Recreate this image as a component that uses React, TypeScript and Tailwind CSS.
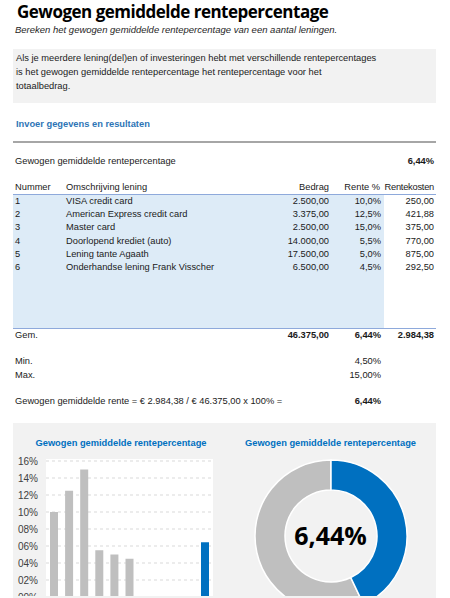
import React from "react";

const rows = [
  ["1", "VISA credit card", "2.500,00", "10,0%", "250,00"],
  ["2", "American Express credit card", "3.375,00", "12,5%", "421,88"],
  ["3", "Master card", "2.500,00", "15,0%", "375,00"],
  ["4", "Doorlopend krediet (auto)", "14.000,00", "5,5%", "770,00"],
  ["5", "Lening tante Agaath", "17.500,00", "5,0%", "875,00"],
  ["6", "Onderhandse lening Frank Visscher", "6.500,00", "4,5%", "292,50"],
];

const bars = [10, 12.5, 15, 5.5, 5, 4.5, 0, 0, 0, 0, 6.44];

function BarChart() {
  const px = 8.5;
  const base = 144; // local y of 0%
  const ticks = [16, 14, 12, 10, 8, 6, 4, 2, 0];
  return (
    <svg width="212" height="143" className="block">
      <rect x="33" y="6" width="167" height="150" fill="#ffffff" />
      {ticks.map((t) => (
        <g key={t}>
          <line x1="33" x2="200" y1={base - t * px} y2={base - t * px} stroke="#d9d9d9" strokeWidth="1" strokeDasharray="3 3" />
          <text x="25" y={base - t * px + 3.5} textAnchor="end" fontSize="10" fill="#404040" fontFamily="Liberation Sans, Arial, sans-serif">
            {(t < 10 ? "0" + t : String(t)) + "%"}
          </text>
        </g>
      ))}
      {bars.map((v, i) =>
        v > 0 ? (
          <rect key={i} x={37 + i * 15.1} y={base - v * px} width="8" height={v * px + 5} fill={i === 10 ? "#0070c0" : "#bfbfbf"} />
        ) : null
      )}
    </svg>
  );
}

function Donut() {
  const cx = 106;
  const cy = 83;
  const R = 76;
  const r = 46;
  const frac = 6.44 / 15;
  const a = frac * Math.PI * 2;
  const pt = (rad: number, ang: number) => [cx + rad * Math.sin(ang), cy - rad * Math.cos(ang)];
  const [ox1, oy1] = pt(R, 0);
  const [ox2, oy2] = pt(R, a);
  const [ix2, iy2] = pt(r, a);
  const [ix1, iy1] = pt(r, 0);
  const blue = `M${ox1} ${oy1} A${R} ${R} 0 ${a > Math.PI ? 1 : 0} 1 ${ox2} ${oy2} L${ix2} ${iy2} A${r} ${r} 0 ${a > Math.PI ? 1 : 0} 0 ${ix1} ${iy1} Z`;
  const gray = `M${ox2} ${oy2} A${R} ${R} 0 ${a > Math.PI ? 0 : 1} 1 ${ox1} ${oy1} L${ix1} ${iy1} A${r} ${r} 0 ${a > Math.PI ? 0 : 1} 0 ${ix2} ${iy2} Z`;
  return (
    <svg width="211" height="143" className="block">
      <path d={gray} fill="#bfbfbf" stroke="#ffffff" strokeWidth="1.5" />
      <path d={blue} fill="#0070c0" stroke="#ffffff" strokeWidth="1.5" />
    </svg>
  );
}

export default function App() {
  const body = { fontFamily: '"Liberation Sans", Arial, sans-serif' };
  return (
    <div className="w-[450px] h-[598px] overflow-hidden bg-white text-[#1a1a1a] text-[9.3px]" style={body}>
      <div className="pl-[13px] w-[436px]">
        <div className="pt-[1px] h-[22px] pl-[4px] text-[17px] leading-[22px] font-bold text-black tracking-[-0.5px] whitespace-nowrap" style={{ fontFamily: '"Open Sans", sans-serif' }}>
          Gewogen gemiddelde rentepercentage
        </div>
        <div className="h-[16px] pt-[1px] pl-[2px] italic leading-[14px] text-[9.5px] text-[#262626]">
          Bereken het gewogen gemiddelde rentepercentage van een aantal leningen.
        </div>
        <div className="mt-[11px] h-[54px] bg-[#f2f2f2] pl-[3px] pt-[2px] leading-[14px]">
          <div>Als je meerdere lening(del)en of investeringen hebt met verschillende rentepercentages</div>
          <div>is het gewogen gemiddelde rentepercentage het rentepercentage voor het</div>
          <div>totaalbedrag.</div>
        </div>
        <div className="h-[38px] pt-[14px] pl-[3px] font-bold text-[#2e75b6] leading-[14px]">Invoer gegevens en resultaten</div>
        <div className="h-[2px] bg-[#a6a6a6]" />
        <div className="mt-[12px] h-[13px] flex items-center justify-between pl-[2px] pr-[2px]">
          <span>Gewogen gemiddelde rentepercentage</span>
          <span className="font-bold">6,44%</span>
        </div>
        <div className="mt-[14px] grid grid-cols-[53px_214px_51px_53px_52px]">
          <div className="h-[13px] border-b border-[#8ea9db] flex items-center pl-[2px]">Nummer</div>
          <div className="h-[13px] border-b border-[#8ea9db] flex items-center">Omschrijving lening</div>
          <div className="h-[13px] border-b border-[#8ea9db] flex items-center justify-end pr-[2px]">Bedrag</div>
          <div className="h-[13px] border-b border-[#8ea9db] flex items-center justify-end pr-[4px] whitespace-nowrap">Rente %</div>
          <div className="h-[13px] border-b border-[#8ea9db] flex items-center justify-end pr-[2px] tracking-[-0.25px] whitespace-nowrap">Rentekosten</div>
        </div>
        <div className="grid grid-cols-[53px_214px_51px_53px_52px] border-b border-[#8ea9db]">
          {Array.from({ length: 10 }).map((_, i) => {
            const r = rows[i] || ["", "", "", "", ""];
            return (
              <React.Fragment key={i}>
                <div className="h-[13.3px] bg-[#ddebf7] flex items-center pl-[2px]">{r[0]}</div>
                <div className="h-[13.3px] bg-[#ddebf7] flex items-center">{r[1]}</div>
                <div className="h-[13.3px] bg-[#ddebf7] flex items-center justify-end pr-[2px]">{r[2]}</div>
                <div className="h-[13.3px] bg-[#ddebf7] flex items-center justify-end pr-[3px]">{r[3]}</div>
                <div className="h-[13.3px] flex items-center justify-end pr-[2px]">{r[4]}</div>
              </React.Fragment>
            );
          })}
        </div>
        <div className="grid grid-cols-[53px_214px_51px_53px_52px]">
          <div className="h-[13.3px] flex items-center pl-[2px]">Gem.</div>
          <div className="h-[13.3px]" />
          <div className="h-[13.3px] flex items-center justify-end pr-[2px] font-bold">46.375,00</div>
          <div className="h-[13.3px] flex items-center justify-end pr-[3px] font-bold">6,44%</div>
          <div className="h-[13.3px] flex items-center justify-end pr-[2px] font-bold">2.984,38</div>

          <div className="h-[13.3px] col-span-5" />

          <div className="h-[13.3px] flex items-center pl-[2px]">Min.</div>
          <div className="h-[13.3px]" />
          <div className="h-[13.3px]" />
          <div className="h-[13.3px] flex items-center justify-end pr-[3px]">4,50%</div>
          <div className="h-[13.3px]" />

          <div className="h-[13.3px] flex items-center pl-[2px]">Max.</div>
          <div className="h-[13.3px]" />
          <div className="h-[13.3px]" />
          <div className="h-[13.3px] flex items-center justify-end pr-[3px]">15,00%</div>
          <div className="h-[13.3px]" />

          <div className="h-[13.3px] col-span-5" />

          <div className="h-[13.3px] col-span-3 flex items-center pl-[2px] whitespace-nowrap">
            Gewogen gemiddelde rente = € 2.984,38 / € 46.375,00 x 100% =
          </div>
          <div className="h-[13.3px] flex items-center justify-end pr-[3px] font-bold">6,44%</div>
          <div className="h-[13.3px]" />
        </div>
        <div className="mt-[14px] h-[200px] bg-[#f2f2f2] flex">
          <div className="w-[212px] flex flex-col">
            <div className="h-[30px] pt-[14px] text-center font-bold text-[#0070c0] text-[9.3px] leading-[12px] pl-[4px]">
              Gewogen gemiddelde rentepercentage
            </div>
            <BarChart />
          </div>
          <div className="w-[211px] flex flex-col">
            <div className="h-[30px] pt-[14px] text-center font-bold text-[#0070c0] text-[9.3px] leading-[12px]">
              Gewogen gemiddelde rentepercentage
            </div>
            <div className="relative">
              <Donut />
              <div className="absolute left-0 top-0 w-[211px] h-[166px] flex items-center justify-center text-[25px] font-bold text-black" style={{ fontFamily: '"Open Sans", sans-serif' }}>
                6,44%
              </div>
            </div>
          </div>
        </div>
      </div>
    </div>
  );
}
